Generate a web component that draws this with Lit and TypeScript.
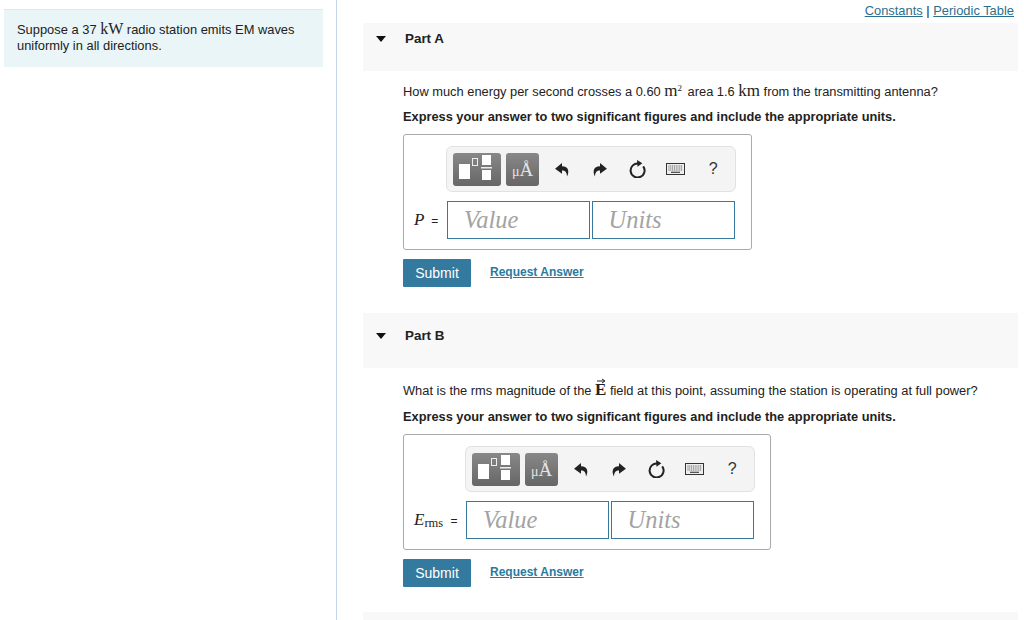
import { LitElement, html, css, svg } from "lit";
import { customElement } from "lit/decorators.js";

const undo = svg`<path d="M7.5 1 L1 6.2 L7.5 11 V8 C10.5 8 12 9.5 12.2 13.5 C14.5 9.5 14 4 7.5 4 Z" fill="#222"/>`;
const redo = svg`<path d="M7.5 1 L14 6.2 L7.5 11 V8 C4.5 8 3 9.5 2.8 13.5 C.5 9.5 1 4 7.5 4 Z" fill="#222"/>`;
const reset = svg`<path d="M9.2 3.4 A6.6 6.6 0 1 0 13.4 6" fill="none" stroke="#222" stroke-width="1.9"/><path d="M7.6 0 L12.6 3 L8 6.4 Z" fill="#222"/>`;
const kb = svg`<rect x=".5" y=".5" width="18" height="11" fill="#eee" stroke="#333"/><path d="M2.5 3h14M2.5 5h14M2.5 7h14" stroke="#555" stroke-width="1" stroke-dasharray="1 .8"/><path d="M5 9.3h9" stroke="#444" stroke-width="1.2"/>`;

@customElement("app-root")
export class AppRoot extends LitElement {
  static styles = css`
    :host { display: block; width: 1024px; height: 620px; overflow: hidden; background: #fff; font-family: "Liberation Sans", Arial, sans-serif; color: #222; }
    .page { display: flex; height: 620px; }
    .left { width: 333px; flex: none; margin-left: 4px; border-right: 1px solid #c3d5e4; padding-top: 9px; box-sizing: border-box; }
    .intro { width: 319px; height: 58px; box-sizing: border-box; background: #e9f5f7; border-top: 1px solid #dde8ea; padding: 11px 13px 0; font-size: 12.9px; line-height: 16px; white-space: nowrap; }
    .m { font-family: "Liberation Serif", serif; font-size: 16px; }
    .mm { font-family: "Liberation Serif", serif; font-size: 17px; }
    .right { flex: 1; padding-left: 26px; padding-right: 6px; min-width: 0; }
    .top { height: 23px; box-sizing: border-box; text-align: right; padding: 3px 4px 0 0; font-size: 12.9px; line-height: 16px; }
    .top a { color: #2b6f8e; text-decoration: underline; }
    .band { background: #f8f8f8; display: flex; align-items: flex-start; padding: 8px 0 0 13px; box-sizing: border-box; font-weight: 700; font-size: 13.4px; line-height: 16px; }
    .a { height: 48px; }
    .b { height: 55px; padding-top: 15px; margin-top: 26px; }
    .c { height: 8px; margin-top: 25px; }
    .tri { width: 0; height: 0; border: 5.5px solid transparent; border-top: 6px solid #111; border-bottom: 0; margin: 5px 19px 0 0; }
    .body { padding-left: 40px; }
    .q { font-size: 12.85px; line-height: 18px; margin: 0; height: 18px; white-space: nowrap; }
    .qa { padding-top: 11px; }
    .qb { padding-top: 14px; }
    .ins { font-size: 12.8px; font-weight: 700; line-height: 16px; margin: 9px 0 0; }
    .box { margin-top: 9px; height: 116px; box-sizing: border-box; border: 1px solid #aaa; border-radius: 3px; display: inline-flex; flex-direction: column; align-items: flex-end; padding: 11px 16px 0 10px; vertical-align: top; }
    .tools { width: 290px; height: 46px; box-sizing: border-box; background: #f4f4f4; border: 1px solid #e2e2e2; border-radius: 6px; display: flex; align-items: center; padding-left: 6px; margin-right: -1px; }
    .tb { height: 33px; border-radius: 3px; background: linear-gradient(#888, #666); flex: none; display: flex; align-items: center; justify-content: center; color: #fff; }
    .tb1 { width: 48px; margin-right: 5px; }
    .tb2 { width: 33px; margin-right: 4px; font-family: "Liberation Serif", serif; font-size: 14px; color: #e4e4e4; align-items: baseline; line-height: 33px; }
    .tb2 span { font-size: 19px; }
    .ic { width: 37.8px; flex: none; display: flex; justify-content: center; align-items: center; color: #333; font-size: 16px; }
    .row { display: flex; align-items: center; margin-top: 9px; height: 38px; align-self: stretch; }
    .lab { flex: none; font-family: "Liberation Serif", serif; font-style: italic; font-size: 17px; white-space: nowrap; }
    .lab span { font-style: normal; font-size: 12.5px; vertical-align: -2px; }
    .lab b { font-style: normal; font-weight: 400; font-family: "Liberation Sans", sans-serif; font-size: 12px; margin-left: 3px; }
    .la { width: 33px; }
    .lb { width: 52px; }
    .fld { width: 143px; height: 38px; box-sizing: border-box; border: 1px solid #37799b; font-family: "Liberation Serif", serif; font-style: italic; font-size: 24.5px; color: #a3a3a3; padding-left: 16px; line-height: 35px; }
    .fld + .fld { margin-left: 2px; width: 142.5px; margin-right: .5px; padding-left: 15.5px; }
    .act { display: flex; align-items: center; margin-top: 9px; }
    .sub { width: 68px; height: 28px; background: #347a9e; color: #fff; font-size: 14px; line-height: 28px; text-align: center; border-radius: 1px; }
    .req { margin-left: 19px; color: #2b7a9e; font-size: 12px; font-weight: 700; text-decoration: underline; margin-top: -2px; }
    .vec { display: inline-block; position: relative; font-family: "Liberation Serif", serif; font-weight: 700; font-size: 17px; line-height: 14px; }
    .vec svg { position: absolute; left: 2px; top: -5px; }
    sup { font-size: 9px; line-height: 0; font-family: "Liberation Serif", serif; margin-right: 2px; }
  `;

  private tools() {
    return html`<div class="tools">
      <div class="tb tb1"><svg width="36" height="28" viewBox="0 0 36 28"><rect x="0" y="9" width="11" height="15" fill="#fff"/><rect x="13.5" y="3.5" width="5" height="7" fill="none" stroke="#eee"/><rect x="23" y="0" width="9" height="10" fill="#fff"/><rect x="22" y="12" width="11" height="1.5" fill="#eee"/><rect x="23" y="15" width="9" height="10" fill="#fff"/></svg></div>
      <div class="tb tb2">μ<span>Å</span></div>
      <div class="ic"><svg width="16" height="15" viewBox="0 0 15 14">${undo}</svg></div>
      <div class="ic"><svg width="16" height="15" viewBox="0 0 15 14">${redo}</svg></div>
      <div class="ic"><svg width="17" height="18" viewBox="0 0 16 17">${reset}</svg></div>
      <div class="ic"><svg width="19" height="12" viewBox="0 0 19 12">${kb}</svg></div>
      <div class="ic">?</div>
    </div>`;
  }

  private answer(label: unknown, cls: string) {
    return html`<div class="box">
      ${this.tools()}
      <div class="row"><div class="lab ${cls}">${label}</div><div class="fld">Value</div><div class="fld">Units</div></div>
    </div>
    <div class="act"><div class="sub">Submit</div><div class="req">Request Answer</div></div>`;
  }

  render() {
    return html`<div class="page">
      <div class="left"><div class="intro">Suppose a 37 <span class="m">kW</span> radio station emits EM waves<br />uniformly in all directions.</div></div>
      <div class="right">
        <div class="top"><a>Constants</a> | <a>Periodic Table</a></div>
        <div class="band a"><div class="tri"></div>Part A</div>
        <div class="body">
          <div class="qa"><p class="q">How much energy per second crosses a 0.60 <span class="mm">m</span><sup>2</sup> area 1.6 <span class="mm">km</span> from the transmitting antenna?</p></div>
          <p class="ins">Express your answer to two significant figures and include the appropriate units.</p>
          ${this.answer(html`P <b>=</b>`, "la")}
        </div>
        <div class="band b"><div class="tri"></div>Part B</div>
        <div class="body">
          <div class="qb"><p class="q">What is the rms magnitude of the <span class="vec"><svg width="9" height="6" viewBox="0 0 9 6"><path d="M0 3h7M5 1l3 2-3 2" stroke="#222" fill="none"/></svg>E</span> field at this point, assuming the station is operating at full power?</p></div>
          <p class="ins">Express your answer to two significant figures and include the appropriate units.</p>
          ${this.answer(html`E<span>rms</span> <b>=</b>`, "lb")}
        </div>
        <div class="band c"></div>
      </div>
    </div>`;
  }
}
